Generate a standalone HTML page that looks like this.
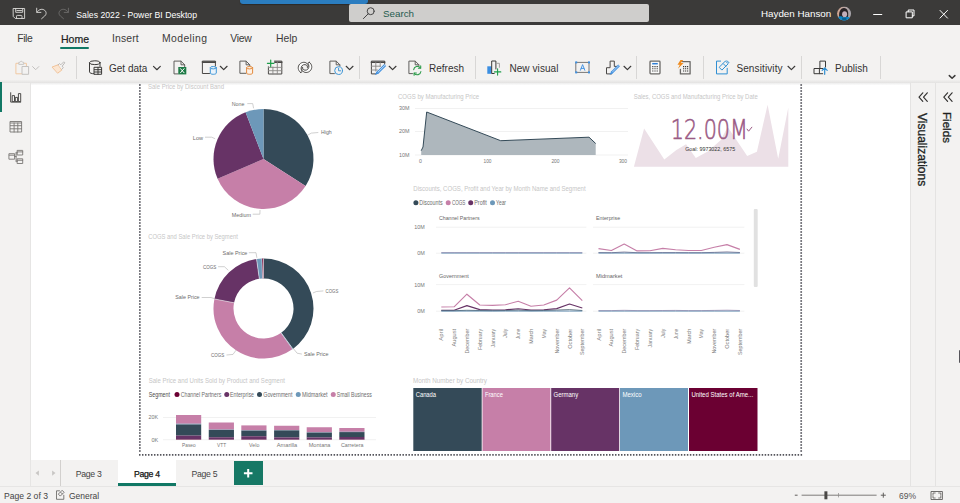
<!DOCTYPE html>
<html lang="en">
<head>
<meta charset="utf-8">
<title>Sales 2022 - Power BI Desktop</title>
<style>
*{box-sizing:border-box;margin:0;padding:0}
html,body{width:960px;height:503px;overflow:hidden;background:#f3f2f1;font-family:"Liberation Sans",sans-serif;}
.t{position:absolute;white-space:nowrap;line-height:1.2}
.a{position:absolute}
svg{position:absolute;overflow:visible}
#titlebar{position:absolute;left:0;top:0;width:960px;height:26px;background:#3b3a39;border-bottom:1px solid #9a9998}
#bluebar{position:absolute;left:240px;top:0;width:128px;height:3.5px;background:#2b7dc0;border-radius:0 0 3px 3px;box-shadow:0 0.5px 1px rgba(0,0,0,.5)}
#search{position:absolute;left:349.3px;top:4.3px;width:300px;height:17.4px;background:#cfcecc;border-radius:2px}
#menubar{position:absolute;left:0;top:25px;width:960px;height:26px;background:#f3f2f1}
#ribbon{position:absolute;left:0;top:51px;width:960px;height:30px;background:#f3f2f1}
#ribbonshadow{position:absolute;left:0;top:80px;width:960px;height:3px;background:linear-gradient(#f1f0ef,#e3e2e1)}
#leftnav{position:absolute;left:0;top:83px;width:31px;height:403px;background:#f3f2f1;border-right:1px solid #e6e5e4}
#navactive{position:absolute;left:0;top:82px;width:2px;height:30px;background:#117865}
#canvas{position:absolute;left:31px;top:83px;width:879px;height:377px;background:linear-gradient(#ededed,#fff 2.5px,#fff)}
#vizpane{position:absolute;left:910px;top:83px;width:25px;height:403px;background:#f3f2f1;border-left:1px solid #e4e3e2}
#fieldspane{position:absolute;left:935px;top:83px;width:25px;height:403px;background:#f3f2f1;border-left:1px solid #e4e3e2}
#tabstrip{position:absolute;left:31px;top:460px;width:879px;height:26px;background:#f3f2f1}
#statusbar{position:absolute;left:0;top:486px;width:960px;height:17px;background:#f3f2f1;border-top:1px solid #e6e5e4}
.sep{position:absolute;top:56px;width:1px;height:23px;background:#d8d7d6}
.menu{font-size:10.4px;color:#3b3a39}
.rt{font-size:10px;color:#333}
.vt{position:absolute;white-space:nowrap;line-height:1.2;writing-mode:vertical-rl;color:#201f1e;-webkit-text-stroke:0.3px #201f1e}
.ct{position:absolute;white-space:nowrap;line-height:1.2;color:#c4c4c4;font-size:6.2px}

</style>
</head>
<body>
<div id="titlebar"></div>
<div id="bluebar"></div>
<div id="search"></div>
<div id="menubar"></div>
<div id="ribbon"></div>
<div id="ribbonshadow"></div>
<div id="leftnav"></div>
<div id="navactive"></div>
<div id="canvas"></div>
<div id="vizpane"></div>
<div id="fieldspane"></div>
<div id="tabstrip"></div>
<div id="statusbar"></div>

<div class="t" style="left:76.3px;top:9.9px;font-size:8.7px;color:#fff">Sales 2022 - Power BI Desktop</div>
<div class="t" style="left:383px;top:8px;font-size:9.8px;color:#1f5c4f">Search</div>
<div class="t" style="left:761px;top:8px;font-size:9.8px;color:#fff">Hayden Hanson</div>

<div class="t menu" style="left:17.3px;top:32.8px;letter-spacing:-0.45px">File</div>
<div class="t menu" style="left:61px;top:32.7px;color:#201f1e;-webkit-text-stroke:0.22px #201f1e;font-size:10.5px">Home</div>
<div class="a" style="left:60.3px;top:46.6px;width:29px;height:2.2px;background:#117865;border-radius:1px"></div>
<div class="t menu" style="left:112px;top:32.8px;letter-spacing:0.15px">Insert</div>
<div class="t menu" style="left:162px;top:32.8px;letter-spacing:0.4px">Modeling</div>
<div class="t menu" style="left:230.3px;top:32.8px;letter-spacing:-0.3px">View</div>
<div class="t menu" style="left:276px;top:32.8px">Help</div>

<div class="sep" style="left:76px"></div>
<div class="sep" style="left:359px"></div>
<div class="sep" style="left:475px"></div>
<div class="sep" style="left:636px"></div>
<div class="sep" style="left:703px"></div>
<div class="sep" style="left:801px"></div>
<div class="sep" style="left:880px"></div>

<div class="t rt" style="left:109px;top:63.1px">Get data</div>
<div class="t rt" style="left:429px;top:63.1px">Refresh</div>
<div class="t rt" style="left:509.4px;top:63.1px;letter-spacing:0.08px">New visual</div>
<div class="t rt" style="left:736.4px;top:63.1px;letter-spacing:0.12px">Sensitivity</div>
<div class="t rt" style="left:835px;top:63.1px">Publish</div>

<div class="vt" style="left:915px;top:113px;font-size:12px">Visualizations</div>
<div class="vt" style="left:940px;top:112px;font-size:11.6px">Fields</div>

<div class="t" style="left:75.8px;top:468.6px;font-size:8.7px;color:#444;letter-spacing:-0.3px">Page 3</div>
<div class="a" style="left:118px;top:460px;width:58px;height:26px;background:#fff;border-bottom:3px solid #117865"></div>
<div class="t" style="left:134px;top:468.6px;font-size:8.7px;color:#111;letter-spacing:-0.3px;-webkit-text-stroke:0.25px #111">Page 4</div>
<div class="t" style="left:191.5px;top:468.6px;font-size:8.7px;color:#444;letter-spacing:-0.3px">Page 5</div>
<div class="a" style="left:60px;top:460px;width:1px;height:26px;background:#d2d0ce"></div>
<div class="a" style="left:234px;top:461px;width:29px;height:24px;background:#167865"></div>

<div class="t" style="left:4px;top:490.5px;font-size:8.6px;color:#444">Page 2 of 3</div>
<div class="t" style="left:69px;top:490.5px;font-size:8.5px;color:#444">General</div>
<div class="t" style="left:899px;top:490.5px;font-size:8.5px;color:#555">69%</div>
<div class="a" style="left:958.700px;top:350px;width:1.300px;height:12.500px;background:#55545a;border-radius:1px 0 0 1px"></div>

<svg id="icons" width="960" height="503" viewBox="0 0 960 503" style="left:0;top:0" fill="none" stroke-linecap="round" stroke-linejoin="round">
<!-- title bar: save / undo / redo -->
<g stroke="#dddbd9" stroke-width=".9">
  <path d="M13.500,8.500h11.100v10h-9.300l-1.800,-1.800z"/>
  <path d="M15.700,8.700v3.600h7v-3.600M16.900,10.500h4.600M16.500,18.300v-2.100a.8,.8 0 0 1 .8,-.8h3.900a.8,.8 0 0 1 .8,.8v2.100"/>
  <path d="M36.700,8.200v4.200h4.200M37,12.200c1.500,-2.400 4.300,-3.700 6.900,-2.400c2.500,1.300 3,4.300 .8,6.200l-3.100,2.700"/>
</g>
<path d="M68.400,8.200v4.200h-4.200M68.100,12.200c-1.500,-2.400 -4.300,-3.700 -6.900,-2.400c-2.500,1.300 -3,4.300 -.8,6.200l3.100,2.700" stroke="#6f6e6d" stroke-width=".9"/>
<!-- search magnifier -->
<g stroke="#444" stroke-width="1"><circle cx="370.700" cy="11.200" r="3.500"/><path d="M368.200,13.800l-4.800,4.800"/></g>
<!-- avatar -->
<defs>
  <clipPath id="avc"><circle cx="844.100" cy="13.600" r="7"/></clipPath>
  <linearGradient id="avg" x1="0" y1="0" x2="1" y2="0"><stop offset="0" stop-color="#d3a58f"/><stop offset=".55" stop-color="#b9a7a6"/><stop offset="1" stop-color="#a3a1a8"/></linearGradient>
</defs>
<g stroke="none" clip-path="url(#avc)">
  <rect x="837" y="6.500" width="14.200" height="14.200" fill="url(#avg)"/>
  <path d="M839.300,17.500c-.9,-4.800 .9,-9.300 4.700,-9.400c3.500,0 5,4 3.900,9.400z" fill="#2a2427"/>
  <ellipse cx="844.600" cy="14.200" rx="2.500" ry="2.900" fill="#c3afba"/>
  <path d="M837,21v-2.600c1.800,-2.200 3.600,-2.400 5.200,-1.600c1.400,.7 2.600,.7 4.200,0c1.500,-.4 3,.4 4.800,2.200v2z" fill="#0c86c6"/>
  <path d="M842,17.200c1.500,.8 3,.8 4.500,0l-.3,3.800h-3.800z" fill="#0a5f8f"/>
</g>
<!-- window controls -->
<g stroke="#fff" stroke-width="1">
  <path d="M873.600,14.500h8.200"/>
  <path d="M906.500,11.900h5.800v5.900h-5.800zM908.200,11.700v-1.700h5.800v5.900h-1.600"/>
  <path d="M940,10.400l7.500,7.700M947.500,10.400l-7.500,7.700"/>
</g>

<!-- ribbon: paste (disabled) -->
<g stroke-width="1">
  <path d="M18.600,63.300h-2.700v10.500h5.800M23.900,63.300h2.500v2.600" stroke="#f0c9a3"/>
  <path d="M18.800,64v-1.700h1.100a1.400,1.400 0 0 1 2.700,0h1.100v1.700z" stroke="#c9c7c5"/>
  <rect x="22.400" y="66.500" width="6.200" height="7.800" stroke="#c4c2c0" fill="#f3f2f1"/>
  <path d="M32.600,66.600l3.100,3.100l3.100,-3.100" stroke="#c2c0be"/>
  <!-- format painter (disabled) -->
  <path d="M52.400,66.900l5.700,-2.100l3.700,5.300l-3.900,2.900z" stroke="#f2c49a" fill="#fbe6d2"/>
  <path d="M58.200,64.800l1.300,-1.200l1.300,1.200l3,-3l1,1l-2.600,3.300l1.100,1.600l-1.500,1.600" stroke="#bdbbb9" fill="#f3f2f1"/>
</g>
<!-- get data -->
<g stroke="#3b3a39" stroke-width="1">
  <path d="M89.500,62.800v9.100c0,1.100 2,1.800 4.400,1.900M100,62.800v3.600"/>
  <ellipse cx="94.750" cy="62.700" rx="5.250" ry="1.900"/>
  <rect x="94.400" y="67.300" width="7.200" height="7" fill="#f3f2f1"/>
  <path d="M94.400,69.700h7.200M94.400,72h7.200M98,67.300v7"/>
  <path d="M153.500,66.400l3.400,3.300l3.400,-3.300" stroke="#3b3a39" stroke-width="1.2"/>
</g>
<!-- excel -->
<g stroke-width="1">
  <path d="M178,73.900h-4v-12.800h7l3.700,3.700v2" stroke="#605e5c"/>
  <path d="M181,61.200v3.600h3.600" stroke="#605e5c"/>
  <rect x="178.300" y="67" width="8" height="7.400" fill="#1d7a45" stroke="none"/>
  <path d="M180.500,68.700l3.600,4.100M184.100,68.700l-3.600,4.100" stroke="#fff" stroke-width="1"/>
</g>
<!-- data hub -->
<g stroke-width="1">
  <path d="M209.500,73.500h-7.100v-12.400h13v5" stroke="#4a4846"/>
  <path d="M202.400,62.100h13" stroke="#4a4846" stroke-width="1.600"/>
  <path d="M210.300,67.800v5.200c0,.8 1.300,1.300 3,1.300s3,-.5 3,-1.300v-5.200" stroke="#3f97d8" fill="#eaf3fb"/>
  <ellipse cx="213.300" cy="67.700" rx="3" ry="1.200" stroke="#3f97d8" fill="#eaf3fb"/>
  <path d="M220.300,66.300l3.400,3.300l3.400,-3.300" stroke="#3b3a39" stroke-width="1.2"/>
</g>
<!-- file + orange db -->
<g stroke-width="1">
  <path d="M246,73.300h-6.100v-12.200h6.200l3.700,3.700v1.400" stroke="#605e5c"/>
  <path d="M246.100,61.300v3.500h3.500" stroke="#605e5c"/>
  <path d="M246.600,67.800v5.200c0,.8 1.300,1.300 3,1.300s3,-.5 3,-1.300v-5.200" stroke="#e38b3e" fill="#fdf1e6"/>
  <ellipse cx="249.600" cy="67.700" rx="3" ry="1.200" stroke="#e38b3e" fill="#fdf1e6"/>
</g>
<!-- enter data table+ -->
<g stroke-width="1">
  <path d="M274.500,61.100h7.300v12.900h-13.400v-7.200" stroke="#4a4846"/>
  <path d="M274.800,62.200h7" stroke="#4a4846" stroke-width="1.500"/>
  <path d="M268.400,67.400h13.400M268.400,70.700h13.400M272.900,67v7M277.300,62v12" stroke="#8a8886" stroke-width=".9"/>
  <path d="M267.400,63.300h6.600M270.700,60v6.600" stroke="#1e9e4a" stroke-width="1.200"/>
</g>
<!-- dataverse swirl -->
<g stroke="#4a4846" stroke-width=".95" fill="#fcfcfc" transform="translate(305 67.400)">
  <path id="sw" d="M-4.600,5C-7.200,3 -7.600,-1 -5.200,-3.400C-3,-5.600 .8,-5.800 2.600,-3.200C3.400,-2 3.200,-.6 2.400,.2C2.600,-1.200 1.800,-2.600 0,-2.800C-2.400,-3 -4,-1 -3.900,1.200C-3.800,2.600 -3.400,3.600 -2.800,4.400C-3.400,4.900 -4,5.100 -4.600,5Z"/>
  <path transform="rotate(180)" d="M-4.600,5C-7.200,3 -7.600,-1 -5.200,-3.400C-3,-5.600 .8,-5.800 2.600,-3.200C3.400,-2 3.200,-.6 2.400,.2C2.600,-1.200 1.800,-2.600 0,-2.800C-2.400,-3 -4,-1 -3.900,1.200C-3.800,2.600 -3.400,3.600 -2.800,4.400C-3.400,4.900 -4,5.100 -4.600,5Z"/>
</g>
<!-- recent sources -->
<g stroke-width="1">
  <path d="M334.400,73.600h-4.500v-12.500h6.300l3.700,3.700v1.200" stroke="#605e5c"/>
  <path d="M336.200,61.300v3.500h3.500" stroke="#605e5c"/>
  <circle cx="338.600" cy="70.600" r="3.900" stroke="#3f97d8" fill="#f3f2f1"/>
  <path d="M338.600,68.200v2.600h2" stroke="#3f97d8"/>
  <path d="M346.200,66.300l3.400,3.300l3.400,-3.300" stroke="#3b3a39" stroke-width="1.2"/>
</g>
<!-- transform data -->
<g stroke-width="1">
  <path d="M376.200,73.900h-4.800v-12.800h13.300v3" stroke="#4a4846"/>
  <path d="M371.400,62.200h13.300" stroke="#4a4846" stroke-width="1.500"/>
  <path d="M371.400,66.200h9M371.400,70h6M375.800,62.500v8.500M380.200,62.500v4" stroke="#8a8886" stroke-width=".9"/>
  <path d="M385.200,65l-8.300,8.300" stroke="#3b8fe2" stroke-width="2.600" stroke-linecap="butt"/>
  <path d="M385.2,65l-8.3,8.3" stroke="#f3f2f1" stroke-width=".8" stroke-linecap="butt"/>
  <path d="M376.900,72.100l-1.600,2.400l2.700,-1.200z" fill="#3b8fe2" stroke="#3b8fe2" stroke-width=".6"/>
  <path d="M389.200,66.300l3.400,3.300l3.400,-3.300" stroke="#3b3a39" stroke-width="1.2"/>
</g>
<!-- refresh -->
<g stroke-width="1">
  <path d="M412.500,73.600h-3.600v-12.500h6.300l3.700,3.700v.8" stroke="#605e5c"/>
  <path d="M415.200,61.300v3.500h3.500" stroke="#605e5c"/>
  <path d="M413.700,69.600a3.700,3.700 0 0 1 6.600,-1.800M420.900,71.500a3.700,3.700 0 0 1 -6.600,1.800" stroke="#2f9c4c" stroke-width="1.100"/>
  <path d="M420.700,65.900v2.300h-2.300M414.100,75.300v-2.300h2.300" stroke="#2f9c4c" stroke-width="1.100"/>
</g>
<!-- new visual -->
<g stroke-width="1">
  <rect x="487.300" y="66.300" width="4.200" height="7.500" fill="#3b8fe2" stroke="none"/>
  <path d="M494.200,73.500h-2.500v-12.500h4.200v8" stroke="#3b3a39"/>
  <path d="M496.400,63.300h3v4" stroke="#a19f9d"/>
  <path d="M494.400,71.900h6.400M497.600,68.700v6.400" stroke="#1e9e4a" stroke-width="1.100"/>
</g>
<!-- text box -->
<g stroke-width="1">
  <rect x="576.200" y="62.400" width="12.800" height="10" stroke="#797775"/>
  <g fill="#3b8fe2" stroke="none"><rect x="575.200" y="61.400" width="2" height="2"/><rect x="588" y="61.400" width="2" height="2"/><rect x="575.200" y="71.400" width="2" height="2"/><rect x="588" y="71.400" width="2" height="2"/></g>
  <path d="M580.400,70.300l2.200,-5.700l2.200,5.700M581.200,68.400h2.800" stroke="#3b8fe2" stroke-width=".9"/>
</g>
<!-- shapes / more visuals -->
<g stroke-width="1">
  <path d="M611.500,73.900h-5v-6.200h3.600v-6.600h4.200v5.300h2.600" stroke="#4a4846"/>
  <path d="M619.100,65.300l-7.600,7.600" stroke="#3b8fe2" stroke-width="2.400" stroke-linecap="butt"/>
  <path d="M619.100,65.300l-7.600,7.600" stroke="#f3f2f1" stroke-width=".7" stroke-linecap="butt"/>
  <path d="M611.400,71.900l-1.500,2.500l2.700,-1.300z" fill="#3b8fe2" stroke="#3b8fe2" stroke-width=".5"/>
  <path d="M624,66.300l3.400,3.300l3.400,-3.300" stroke="#3b3a39" stroke-width="1.2"/>
</g>
<!-- new measure (calculator) -->
<g>
  <rect x="650" y="61.200" width="10" height="12.700" rx=".8" fill="#fbfbfb" stroke="#6b6967" stroke-width="1.300"/>
  <path d="M652.200,63.700h5.600" stroke="#2f7fd6" stroke-width="1.500" stroke-linecap="butt"/>
  <path d="M652.200,66.600h5.600M652.200,68.800h5.600M652.200,71h5.600" stroke="#3b3a39" stroke-width="1.100" stroke-dasharray="1.2 1" stroke-linecap="butt"/>
</g>
<!-- quick measure -->
<g>
  <path d="M682.500,61.600h7.600v12.300h-9.700v-4.500" stroke="#6b6967" stroke-width="1.300"/>
  <path d="M683,66.600h5.200M683,68.800h5.200M683,71h5.200" stroke="#3b3a39" stroke-width="1.100" stroke-dasharray="1.2 .8" stroke-linecap="butt"/>
  <path d="M680.500,60l-3,4.700h2.300l-1.900,4.100l5.700,-5.800h-2.700l2.400,-3z" fill="#ee8a1d" stroke="none"/>
</g>
<!-- sensitivity -->
<g stroke="#2f8fd3" stroke-width="1">
  <path d="M720.600,61.100h-4.100v12.800h10.700v-5.600"/>
  <path d="M725.700,61.300l2.500,2.500l-6.300,6.300l-2.500,-2.500zM727,60.700l2,2M723.400,63.800l2.400,2.400"/>
  <path d="M788,66.300l3.400,3.300l3.400,-3.300" stroke="#3b3a39" stroke-width="1.2"/>
</g>
<!-- publish -->
<g stroke-width="1">
  <path d="M819.900,68.300v-7.200h5.600v6" stroke="#3b3a39"/>
  <rect x="814.400" y="68.500" width="5" height="5.200" stroke="#3b3a39"/>
  <path d="M819.400,68.500h3.300M819.400,73.700h3.300" stroke="#3b3a39"/>
  <path d="M824.700,74.300v-6.200M822.200,70.300l2.500,-2.500l2.500,2.500" stroke="#2f8fd3" stroke-width="1.200"/>
</g>
<!-- collapse ribbon chevron -->
<path d="M949.300,75.600l2.800,2.700l2.800,-2.700" stroke="#3b3a39" stroke-width="1.5"/>

<!-- left nav icons -->
<g stroke="#3b3a39" stroke-width=".9">
  <path d="M10.700,92.700v9.400h10"/>
  <rect x="12.600" y="95.600" width="1.900" height="6"/><rect x="15.700" y="97.400" width="1.900" height="4.200"/><rect x="18.800" y="93.600" width="1.900" height="8"/>
</g>
<g stroke="#797775" stroke-width=".9">
  <rect x="10.400" y="121.500" width="11.200" height="10.500"/>
  <path d="M10.400,123h11.200M10.400,125.700h11.200M10.400,128.800h11.200M14.100,123v9M17.800,123v9"/>
  <rect x="9.300" y="153.700" width="5.300" height="5.500"/><rect x="17.500" y="150.400" width="5.200" height="4.600"/><rect x="17.500" y="158.800" width="5.200" height="4.700"/>
  <path d="M9.300,155.200h5.300M17.500,151.900h5.200M17.500,160.300h5.200M14.600,156.500h1.500M16.100,152.800v8.400M16.100,152.800h1.400M16.100,161.200h1.400"/>
</g>
<!-- pane chevrons -->
<g stroke="#323130" stroke-width="1.15">
  <path d="M922.800,92.800l-3.800,4.300l3.800,4.300M927.300,92.800l-3.800,4.300l3.800,4.300"/>
  <path d="M947.600,92.800l-3.800,4.300l3.800,4.300M952.100,92.800l-3.800,4.300l3.800,4.300"/>
</g>
<!-- page nav arrows -->
<g fill="#c8c6c4" stroke="none"><path d="M38.900,470.400v5.300l-3.400,-2.650z"/><path d="M52.100,470.400v5.300l3.400,-2.650z"/></g>
<!-- add page plus -->
<path d="M243.900,473.200h8.600M248.200,468.900v8.600" stroke="#fff" stroke-width="2" stroke-linecap="butt"/>
<!-- status sensitivity icon -->
<g stroke="#605e5c" stroke-width=".8">
  <path d="M59.500,490.800h-3v8.500h7.300v-4"/>
  <path d="M62.400,490.600l1.700,1.700l-3.800,3.800l-1.700,-1.700zM60.800,492.400l1.500,1.500"/>
</g>
<!-- fit to page -->
<g stroke="#605e5c" stroke-width=".9">
  <rect x="931.400" y="491.500" width="11" height="8"/>
  <path d="M933,495v-2h2.200M940.800,495v-2h-2.200M933,496v2h2.200M940.800,496v2h-2.200" stroke-width=".8"/>
</g>
<!-- zoom slider -->
<g stroke="#605e5c" stroke-linecap="butt">
  <path d="M794.800,495.200h2.800" stroke-width="1"/>
  <path d="M801.600,495.200h75" stroke-width=".8"/>
  <path d="M838.500,493v4.400" stroke-width=".7" stroke="#8a8886"/>
  <path d="M825.900,491.300v8" stroke-width="3" stroke="#4a4846"/>
  <path d="M880.800,495.200h5M883.300,492.700v5" stroke-width="1"/>
</g>
</svg>

<svg id="report" width="960" height="503" viewBox="0 0 960 503" style="left:0;top:0" font-family="'Liberation Sans',sans-serif">
<path d="M139.850,84.250V453M801.200,84.250V453" fill="none" stroke="#4d4d55" stroke-width="1.700" stroke-dasharray="1.600 1.400"/>
<path d="M802.100,454.850H139" fill="none" stroke="#55555c" stroke-width="1.600" stroke-dasharray="1.500 1.4937"/>
<text x="148.00" y="89" font-size="6.5" fill="#c6c6c6" textLength="76" lengthAdjust="spacingAndGlyphs">Sale Price by Discount Band</text>
<path d="M263.50,159.00L263.50,109.00A50,50 0 0 1 305.58,186.01Z" fill="#344a58"/>
<path d="M263.50,159.00L305.58,186.01A50,50 0 0 1 217.58,178.78Z" fill="#c67fa8"/>
<path d="M263.50,159.00L217.58,178.78A50,50 0 0 1 245.58,112.32Z" fill="#673366"/>
<path d="M263.50,159.00L245.58,112.32A50,50 0 0 1 263.50,109.00Z" fill="#6d98b9"/>
<polyline points="247.3,103.6 252.7,103.6 253.6,108.3" fill="none" stroke="#b0b0b0" stroke-width="0.6"/>
<polyline points="318.3,132.5 311.4,133.1 307.6,135.2" fill="none" stroke="#b0b0b0" stroke-width="0.6"/>
<polyline points="205.0,137.2 211.6,137.2 215.1,138.7" fill="none" stroke="#b0b0b0" stroke-width="0.6"/>
<polyline points="252.7,214.2 259.9,214.2 260.0,210.0" fill="none" stroke="#b0b0b0" stroke-width="0.6"/>
<text x="231.80" y="105.9" font-size="6.0" fill="#6c6c6c" textLength="12.6" lengthAdjust="spacingAndGlyphs">None</text>
<text x="321.00" y="134" font-size="6.0" fill="#6c6c6c" textLength="10.7" lengthAdjust="spacingAndGlyphs">High</text>
<text x="192.80" y="139.5" font-size="6.0" fill="#6c6c6c" textLength="10.2" lengthAdjust="spacingAndGlyphs">Low</text>
<text x="231.80" y="216.9" font-size="6.0" fill="#6c6c6c" textLength="19.2" lengthAdjust="spacingAndGlyphs">Medium</text>
<text x="148.30" y="238.7" font-size="6.5" fill="#c6c6c6" textLength="89.5" lengthAdjust="spacingAndGlyphs">COGS and Sale Price by Segment</text>
<path d="M263.50,258.50A50,50 0 0 1 292.96,348.90L281.18,332.74A30,30 0 0 0 263.50,278.50Z" fill="#344a58"/>
<path d="M292.96,348.90A50,50 0 0 1 292.32,349.36L280.79,333.01A30,30 0 0 0 281.18,332.74Z" fill="#6d98b9"/>
<path d="M292.32,349.36A50,50 0 0 1 214.42,298.96L234.05,302.78A30,30 0 0 0 280.79,333.01Z" fill="#c67fa8"/>
<path d="M214.42,298.96A50,50 0 0 1 256.54,258.99L259.32,278.79A30,30 0 0 0 234.05,302.78Z" fill="#673366"/>
<path d="M256.54,258.99A50,50 0 0 1 261.93,258.52L262.56,278.51A30,30 0 0 0 259.32,278.79Z" fill="#6d98b9"/>
<path d="M261.93,258.52A50,50 0 0 1 263.50,258.50L263.50,278.50A30,30 0 0 0 262.56,278.51Z" fill="#6b0032"/>
<line x1="263.50" y1="278.50" x2="263.50" y2="258.50" stroke="#fff" stroke-width="0.5"/>
<line x1="281.18" y1="332.74" x2="292.96" y2="348.90" stroke="#fff" stroke-width="0.5"/>
<line x1="234.05" y1="302.78" x2="214.42" y2="298.96" stroke="#fff" stroke-width="0.5"/>
<line x1="259.32" y1="278.79" x2="256.54" y2="258.99" stroke="#fff" stroke-width="0.5"/>
<line x1="262.56" y1="278.51" x2="261.93" y2="258.52" stroke="#fff" stroke-width="0.5"/>
<polyline points="248.8,252.7 256.0,252.7 256.9,257.8" fill="none" stroke="#b0b0b0" stroke-width="0.6"/>
<polyline points="218.1,266.7 224.4,266.7 228.3,270.3" fill="none" stroke="#b0b0b0" stroke-width="0.6"/>
<polyline points="201.7,297.5 211.0,297.5 214.5,298.6" fill="none" stroke="#b0b0b0" stroke-width="0.6"/>
<polyline points="323.4,290.9 316.5,291.5 312.9,293.0" fill="none" stroke="#b0b0b0" stroke-width="0.6"/>
<polyline points="301.9,354.1 297.1,353.2 293.5,348.7" fill="none" stroke="#b0b0b0" stroke-width="0.6"/>
<polyline points="226.5,355.0 233.0,354.4 236.0,350.2" fill="none" stroke="#b0b0b0" stroke-width="0.6"/>
<text x="222.60" y="254.6" font-size="6.0" fill="#6c6c6c" textLength="24.8" lengthAdjust="spacingAndGlyphs">Sale Price</text>
<text x="202.90" y="268.6" font-size="6.0" fill="#6c6c6c" textLength="13.4" lengthAdjust="spacingAndGlyphs">COGS</text>
<text x="175.20" y="299.4" font-size="6.0" fill="#6c6c6c" textLength="24.4" lengthAdjust="spacingAndGlyphs">Sale Price</text>
<text x="325.50" y="292.8" font-size="6.0" fill="#6c6c6c" textLength="12.8" lengthAdjust="spacingAndGlyphs">COGS</text>
<text x="304.00" y="356" font-size="6.0" fill="#6c6c6c" textLength="24.4" lengthAdjust="spacingAndGlyphs">Sale Price</text>
<text x="211.00" y="356.9" font-size="6.0" fill="#6c6c6c" textLength="13.4" lengthAdjust="spacingAndGlyphs">COGS</text>
<text x="148.70" y="383.1" font-size="6.5" fill="#c6c6c6" textLength="136.3" lengthAdjust="spacingAndGlyphs">Sale Price and Units Sold by Product and Segment</text>
<text x="148.75" y="396.5" font-size="6.5" fill="#4a4a4a" textLength="21.2" lengthAdjust="spacingAndGlyphs">Segment</text>
<circle cx="177" cy="394.6" r="2.5" fill="#6b0032"/>
<text x="180.75" y="396.5" font-size="6.5" fill="#6c6c6c" textLength="40.5" lengthAdjust="spacingAndGlyphs">Channel Partners</text>
<circle cx="226.75" cy="394.6" r="2.5" fill="#673366"/>
<text x="230.00" y="396.5" font-size="6.5" fill="#6c6c6c" textLength="24" lengthAdjust="spacingAndGlyphs">Enterprise</text>
<circle cx="259.5" cy="394.6" r="2.5" fill="#344a58"/>
<text x="263.25" y="396.5" font-size="6.5" fill="#6c6c6c" textLength="29.25" lengthAdjust="spacingAndGlyphs">Government</text>
<circle cx="298.25" cy="394.6" r="2.5" fill="#6d98b9"/>
<text x="302.00" y="396.5" font-size="6.5" fill="#6c6c6c" textLength="25.5" lengthAdjust="spacingAndGlyphs">Midmarket</text>
<circle cx="333.25" cy="394.6" r="2.5" fill="#c67fa8"/>
<text x="336.75" y="396.5" font-size="6.5" fill="#6c6c6c" textLength="35" lengthAdjust="spacingAndGlyphs">Small Business</text>
<path d="M163,417.5H376M163,439.75H376" stroke="#e8e8e8" stroke-width="0.6" fill="none"/>
<text x="148.60" y="419.3" font-size="5.7" fill="#777" textLength="9.5" lengthAdjust="spacingAndGlyphs">20K</text>
<text x="151.50" y="441.6" font-size="5.7" fill="#777" textLength="6.8" lengthAdjust="spacingAndGlyphs">0K</text>
<rect x="176" y="415" width="25.2" height="8.75" fill="#c67fa8"/>
<rect x="176" y="423.75" width="25.2" height="0.75" fill="#6d98b9"/>
<rect x="176" y="424.5" width="25.2" height="11.10" fill="#344a58"/>
<rect x="176" y="435.6" width="25.2" height="3.80" fill="#673366"/>
<rect x="176" y="439.4" width="25.2" height="0.35" fill="#6b0032"/>
<text x="182.10" y="447.2" font-size="5.7" fill="#777" textLength="13.6" lengthAdjust="spacingAndGlyphs">Paseo</text>
<rect x="208.75" y="422.5" width="25.2" height="7.10" fill="#c67fa8"/>
<rect x="208.75" y="429.6" width="25.2" height="0.30" fill="#6d98b9"/>
<rect x="208.75" y="429.9" width="25.2" height="7.35" fill="#344a58"/>
<rect x="208.75" y="437.25" width="25.2" height="2.25" fill="#673366"/>
<rect x="208.75" y="439.5" width="25.2" height="0.25" fill="#6b0032"/>
<text x="217.10" y="447.2" font-size="5.7" fill="#777" textLength="9.1" lengthAdjust="spacingAndGlyphs">VTT</text>
<rect x="241.3" y="425.4" width="25.2" height="4.90" fill="#c67fa8"/>
<rect x="241.3" y="430.3" width="25.2" height="0.30" fill="#6d98b9"/>
<rect x="241.3" y="430.6" width="25.2" height="5.65" fill="#344a58"/>
<rect x="241.3" y="436.25" width="25.2" height="3.25" fill="#673366"/>
<rect x="241.3" y="439.5" width="25.2" height="0.25" fill="#6b0032"/>
<text x="249.08" y="447.2" font-size="5.7" fill="#777" textLength="10.25" lengthAdjust="spacingAndGlyphs">Velo</text>
<rect x="274.1" y="425.75" width="25.2" height="4.35" fill="#c67fa8"/>
<rect x="274.1" y="430.1" width="25.2" height="0.30" fill="#6d98b9"/>
<rect x="274.1" y="430.4" width="25.2" height="7.00" fill="#344a58"/>
<rect x="274.1" y="437.4" width="25.2" height="2.10" fill="#673366"/>
<rect x="274.1" y="439.5" width="25.2" height="0.25" fill="#6b0032"/>
<text x="276.75" y="447.2" font-size="5.7" fill="#777" textLength="20.5" lengthAdjust="spacingAndGlyphs">Amarilla</text>
<rect x="306.7" y="427.25" width="25.2" height="5.05" fill="#c67fa8"/>
<rect x="306.7" y="432.3" width="25.2" height="0.30" fill="#6d98b9"/>
<rect x="306.7" y="432.6" width="25.2" height="4.80" fill="#344a58"/>
<rect x="306.7" y="437.4" width="25.2" height="2.10" fill="#673366"/>
<rect x="306.7" y="439.5" width="25.2" height="0.25" fill="#6b0032"/>
<text x="308.72" y="447.2" font-size="5.7" fill="#777" textLength="21.75" lengthAdjust="spacingAndGlyphs">Montana</text>
<rect x="339.3" y="428" width="25.2" height="3.80" fill="#c67fa8"/>
<rect x="339.3" y="431.8" width="25.2" height="0.30" fill="#6d98b9"/>
<rect x="339.3" y="432.1" width="25.2" height="4.90" fill="#344a58"/>
<rect x="339.3" y="437" width="25.2" height="2.50" fill="#673366"/>
<rect x="339.3" y="439.5" width="25.2" height="0.25" fill="#6b0032"/>
<text x="340.95" y="447.2" font-size="5.7" fill="#777" textLength="22.5" lengthAdjust="spacingAndGlyphs">Carretera</text>
<text x="398.00" y="99.3" font-size="6.5" fill="#c6c6c6" textLength="81" lengthAdjust="spacingAndGlyphs">COGS by Manufacturing Price</text>
<path d="M415,108.500H628M415,131.500H628M415,155H628" stroke="#e8e8e8" stroke-width="0.6" fill="none"/>
<text x="399.00" y="110.2" font-size="5.7" fill="#777" textLength="10.5" lengthAdjust="spacingAndGlyphs">30M</text>
<text x="399.00" y="133.3" font-size="5.7" fill="#777" textLength="10.5" lengthAdjust="spacingAndGlyphs">20M</text>
<text x="399.00" y="156.8" font-size="5.7" fill="#777" textLength="10.5" lengthAdjust="spacingAndGlyphs">10M</text>
<path d="M421.2,155V150.7L423,147L426.7,112L500.7,140.7L589,137.2L595.7,143.5V155Z" fill="#aeb7bd"/>
<path d="M421.2,150.7L423,147L426.7,112L500.7,140.7L589,137.2L595.7,143.5" fill="none" stroke="#344a58" stroke-width="1" stroke-linejoin="round"/>
<text x="419.05" y="162.5" font-size="5.7" fill="#777" textLength="2.9" lengthAdjust="spacingAndGlyphs">0</text>
<text x="483.50" y="162.5" font-size="5.7" fill="#777" textLength="8" lengthAdjust="spacingAndGlyphs">100</text>
<text x="551.38" y="162.5" font-size="5.7" fill="#777" textLength="8.25" lengthAdjust="spacingAndGlyphs">200</text>
<text x="618.88" y="162.5" font-size="5.7" fill="#777" textLength="8.25" lengthAdjust="spacingAndGlyphs">300</text>
<text x="633.70" y="99.3" font-size="6.5" fill="#c6c6c6" textLength="124" lengthAdjust="spacingAndGlyphs">Sales, COGS and Manufacturing Price by Date</text>
<polygon points="633.9,166.7 644.1,128.6 664.3,159.6 676.4,149.9 686.1,144.2 695.8,157.9 708.2,151.3 720.6,140.2 727.7,126.9 747.2,156.1 756.9,151.7 767.6,104.7 778.2,158.8 788.3,107.4 788.3,166.7" fill="#ece0e7"/>
<text x="670.8" y="138.6" font-size="26" fill="#9b5a84" stroke="#9b5a84" stroke-width=".6" textLength="77" lengthAdjust="spacingAndGlyphs" font-family="'DejaVu Sans','Liberation Sans',sans-serif" font-weight="200">12.00M</text>
<polyline points="746.8,128.8 748.6,131.2 752.1,126.9" fill="none" stroke="#9b5a84" stroke-width="1"/>
<text x="685.20" y="150.6" font-size="5.8" fill="#333" textLength="50" lengthAdjust="spacingAndGlyphs">Goal: 9973022, 6575</text>
<text x="413.30" y="191.4" font-size="6.5" fill="#c6c6c6" textLength="172.3" lengthAdjust="spacingAndGlyphs">Discounts, COGS, Profit and Year by Month Name and Segment</text>
<circle cx="415.9" cy="202.8" r="2.5" fill="#344a58"/>
<text x="419.30" y="204.7" font-size="6.5" fill="#6c6c6c" textLength="23.3" lengthAdjust="spacingAndGlyphs">Discounts</text>
<circle cx="448.2" cy="202.8" r="2.5" fill="#c67fa8"/>
<text x="451.90" y="204.7" font-size="6.5" fill="#6c6c6c" textLength="13.5" lengthAdjust="spacingAndGlyphs">COGS</text>
<circle cx="470.7" cy="202.8" r="2.5" fill="#673366"/>
<text x="474.30" y="204.7" font-size="6.5" fill="#6c6c6c" textLength="12.5" lengthAdjust="spacingAndGlyphs">Profit</text>
<circle cx="492.5" cy="202.8" r="2.5" fill="#6d98b9"/>
<text x="496.10" y="204.7" font-size="6.5" fill="#6c6c6c" textLength="9.9" lengthAdjust="spacingAndGlyphs">Year</text>
<path d="M436,227.2H586.4M436,253.2H586.4" stroke="#e8e8e8" stroke-width="0.6" fill="none"/>
<text x="439.00" y="220.1" font-size="6.0" fill="#666" textLength="40.5" lengthAdjust="spacingAndGlyphs">Channel Partners</text>
<polyline points="441.3,252.6 454.1,252.6 466.9,252.6 479.8,252.6 492.6,252.6 505.4,252.6 518.2,252.6 531.0,252.6 543.8,252.6 556.7,252.6 569.5,252.6 582.3,252.6" fill="none" stroke="#9a7aa5" stroke-width="0.7" stroke-linejoin="round"/>
<polyline points="441.3,253.1 454.1,253.1 466.9,253.1 479.8,253.1 492.6,253.1 505.4,253.1 518.2,253.1 531.0,253.1 543.8,253.1 556.7,253.1 569.5,253.1 582.3,253.1" fill="none" stroke="#6490b3" stroke-width="0.9" stroke-linejoin="round"/>
<path d="M593,227.2H744.4M593,253.2H744.4" stroke="#e8e8e8" stroke-width="0.6" fill="none"/>
<text x="596.00" y="220.1" font-size="6.0" fill="#666" textLength="24.1" lengthAdjust="spacingAndGlyphs">Enterprise</text>
<polyline points="598.5,248.6 611.4,250.5 624.2,244.0 637.1,250.9 649.9,250.7 662.8,248.4 675.6,249.8 688.5,250.5 701.3,250.5 714.2,247.2 727.0,244.6 739.9,249.4" fill="none" stroke="#c67fa8" stroke-width="1.15" stroke-linejoin="round"/>
<polyline points="598.5,252.6 611.4,252.7 624.2,252.1 637.1,252.7 649.9,252.7 662.8,252.6 675.6,252.6 688.5,252.7 701.3,252.7 714.2,252.4 727.0,252.0 739.9,252.5" fill="none" stroke="#5b5378" stroke-width="0.8" stroke-linejoin="round"/>
<polyline points="598.5,253.1 611.4,253.1 624.2,253.1 637.1,253.1 649.9,253.1 662.8,253.1 675.6,253.1 688.5,253.1 701.3,253.1 714.2,253.1 727.0,253.1 739.9,253.1" fill="none" stroke="#6490b3" stroke-width="0.9" stroke-linejoin="round"/>
<path d="M436,284.6H586.4M436,311.2H586.4" stroke="#e8e8e8" stroke-width="0.6" fill="none"/>
<text x="439.00" y="277.5" font-size="6.0" fill="#666" textLength="29.7" lengthAdjust="spacingAndGlyphs">Government</text>
<polyline points="441.3,307.0 454.1,306.8 466.9,294.2 479.8,305.0 492.6,305.4 505.4,304.7 518.2,301.3 531.0,306.2 543.8,305.0 556.7,300.1 569.5,287.8 582.3,300.7" fill="none" stroke="#c67fa8" stroke-width="1.15" stroke-linejoin="round"/>
<polyline points="441.3,310.2 454.1,310.2 466.9,305.6 479.8,309.6 492.6,310.0 505.4,309.8 518.2,308.8 531.0,310.0 543.8,309.8 556.7,308.6 569.5,304.0 582.3,308.0" fill="none" stroke="#673366" stroke-width="1.15" stroke-linejoin="round"/>
<polyline points="441.3,310.7 454.1,310.7 466.9,310.3 479.8,310.5 492.6,310.7 505.4,310.5 518.2,310.1 531.0,310.7 543.8,310.5 556.7,310.1 569.5,309.7 582.3,310.5" fill="none" stroke="#344a58" stroke-width="0.8" stroke-linejoin="round"/>
<polyline points="441.3,311.1 454.1,311.1 466.9,311.1 479.8,311.1 492.6,311.1 505.4,311.1 518.2,311.1 531.0,311.1 543.8,311.1 556.7,311.1 569.5,311.1 582.3,311.1" fill="none" stroke="#6490b3" stroke-width="0.9" stroke-linejoin="round"/>
<path d="M593,284.6H744.4M593,311.2H744.4" stroke="#e8e8e8" stroke-width="0.6" fill="none"/>
<text x="596.00" y="277.5" font-size="6.0" fill="#666" textLength="26.4" lengthAdjust="spacingAndGlyphs">Midmarket</text>
<polyline points="598.5,310.6 611.4,310.6 624.2,310.3 637.1,310.6 649.9,310.6 662.8,310.5 675.6,310.4 688.5,310.6 701.3,310.6 714.2,310.4 727.0,310.2 739.9,310.5" fill="none" stroke="#9a7aa5" stroke-width="0.7" stroke-linejoin="round"/>
<polyline points="598.5,311.1 611.4,311.1 624.2,311.1 637.1,311.1 649.9,311.1 662.8,311.1 675.6,311.1 688.5,311.1 701.3,311.1 714.2,311.1 727.0,311.1 739.9,311.1" fill="none" stroke="#6490b3" stroke-width="0.9" stroke-linejoin="round"/>
<text x="414.30" y="229.1" font-size="5.7" fill="#777" textLength="10.5" lengthAdjust="spacingAndGlyphs">10M</text>
<text x="417.20" y="255.1" font-size="5.7" fill="#777" textLength="7.6" lengthAdjust="spacingAndGlyphs">0M</text>
<text x="414.30" y="286.5" font-size="5.7" fill="#777" textLength="10.5" lengthAdjust="spacingAndGlyphs">10M</text>
<text x="417.20" y="313.1" font-size="5.7" fill="#777" textLength="7.6" lengthAdjust="spacingAndGlyphs">0M</text>
<text transform="translate(443.3,340.8) rotate(-90)" font-size="5.900" fill="#808080" textLength="12" lengthAdjust="spacingAndGlyphs">April</text>
<text transform="translate(456.1,346.5) rotate(-90)" font-size="5.900" fill="#808080" textLength="17.7" lengthAdjust="spacingAndGlyphs">August</text>
<text transform="translate(468.9,353.6) rotate(-90)" font-size="5.900" fill="#808080" textLength="24.8" lengthAdjust="spacingAndGlyphs">December</text>
<text transform="translate(481.8,350.1) rotate(-90)" font-size="5.900" fill="#808080" textLength="21.25" lengthAdjust="spacingAndGlyphs">February</text>
<text transform="translate(494.6,347.4) rotate(-90)" font-size="5.900" fill="#808080" textLength="18.6" lengthAdjust="spacingAndGlyphs">January</text>
<text transform="translate(507.4,337.7) rotate(-90)" font-size="5.900" fill="#808080" textLength="8.9" lengthAdjust="spacingAndGlyphs">July</text>
<text transform="translate(520.2,339.1) rotate(-90)" font-size="5.900" fill="#808080" textLength="10.3" lengthAdjust="spacingAndGlyphs">June</text>
<text transform="translate(533.0,343.8) rotate(-90)" font-size="5.900" fill="#808080" textLength="15" lengthAdjust="spacingAndGlyphs">March</text>
<text transform="translate(545.8,338.5) rotate(-90)" font-size="5.900" fill="#808080" textLength="9.7" lengthAdjust="spacingAndGlyphs">May</text>
<text transform="translate(558.7,353.6) rotate(-90)" font-size="5.900" fill="#808080" textLength="24.8" lengthAdjust="spacingAndGlyphs">November</text>
<text transform="translate(571.5,348.8) rotate(-90)" font-size="5.900" fill="#808080" textLength="20" lengthAdjust="spacingAndGlyphs">October</text>
<text transform="translate(584.3,355.0) rotate(-90)" font-size="5.900" fill="#808080" textLength="26.2" lengthAdjust="spacingAndGlyphs">September</text>
<text transform="translate(600.5,340.8) rotate(-90)" font-size="5.900" fill="#808080" textLength="12" lengthAdjust="spacingAndGlyphs">April</text>
<text transform="translate(613.4,346.5) rotate(-90)" font-size="5.900" fill="#808080" textLength="17.7" lengthAdjust="spacingAndGlyphs">August</text>
<text transform="translate(626.2,353.6) rotate(-90)" font-size="5.900" fill="#808080" textLength="24.8" lengthAdjust="spacingAndGlyphs">December</text>
<text transform="translate(639.1,350.1) rotate(-90)" font-size="5.900" fill="#808080" textLength="21.25" lengthAdjust="spacingAndGlyphs">February</text>
<text transform="translate(651.9,347.4) rotate(-90)" font-size="5.900" fill="#808080" textLength="18.6" lengthAdjust="spacingAndGlyphs">January</text>
<text transform="translate(664.8,337.7) rotate(-90)" font-size="5.900" fill="#808080" textLength="8.9" lengthAdjust="spacingAndGlyphs">July</text>
<text transform="translate(677.6,339.1) rotate(-90)" font-size="5.900" fill="#808080" textLength="10.3" lengthAdjust="spacingAndGlyphs">June</text>
<text transform="translate(690.5,343.8) rotate(-90)" font-size="5.900" fill="#808080" textLength="15" lengthAdjust="spacingAndGlyphs">March</text>
<text transform="translate(703.3,338.5) rotate(-90)" font-size="5.900" fill="#808080" textLength="9.7" lengthAdjust="spacingAndGlyphs">May</text>
<text transform="translate(716.2,353.6) rotate(-90)" font-size="5.900" fill="#808080" textLength="24.8" lengthAdjust="spacingAndGlyphs">November</text>
<text transform="translate(729.0,348.8) rotate(-90)" font-size="5.900" fill="#808080" textLength="20" lengthAdjust="spacingAndGlyphs">October</text>
<text transform="translate(741.9,355.0) rotate(-90)" font-size="5.900" fill="#808080" textLength="26.2" lengthAdjust="spacingAndGlyphs">September</text>
<rect x="753.8" y="209" width="3.9" height="78" rx="1" fill="#e1e1e1"/>
<text x="413.00" y="383" font-size="6.5" fill="#c6c6c6" textLength="74" lengthAdjust="spacingAndGlyphs">Month Number by Country</text>
<rect x="413.3" y="388" width="68.4" height="63" fill="#344a58"/>
<text x="415.70" y="396.8" font-size="6.5" fill="#fff" textLength="20.4" lengthAdjust="spacingAndGlyphs">Canada</text>
<rect x="482.5" y="388" width="67.9" height="63" fill="#c67fa8"/>
<text x="484.90" y="396.8" font-size="6.5" fill="#fff" textLength="18" lengthAdjust="spacingAndGlyphs">France</text>
<rect x="551.2" y="388" width="68.0" height="63" fill="#673366"/>
<text x="553.60" y="396.8" font-size="6.5" fill="#fff" textLength="24.6" lengthAdjust="spacingAndGlyphs">Germany</text>
<rect x="620" y="388" width="68.0" height="63" fill="#6d98b9"/>
<text x="622.40" y="396.8" font-size="6.5" fill="#fff" textLength="19.2" lengthAdjust="spacingAndGlyphs">Mexico</text>
<rect x="689" y="388" width="68.5" height="63" fill="#6b0032"/>
<text x="691.40" y="396.8" font-size="6.5" fill="#fff" textLength="61.7" lengthAdjust="spacingAndGlyphs">United States of Ame...</text>
</svg>

</body>
</html>
